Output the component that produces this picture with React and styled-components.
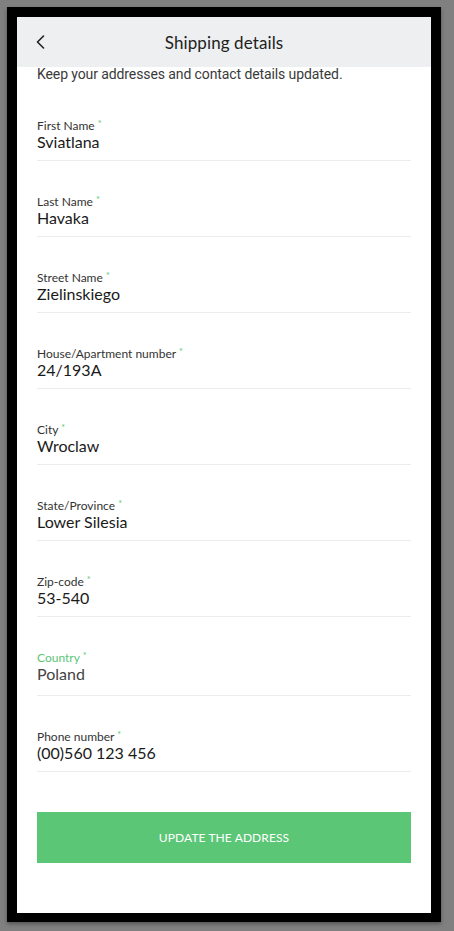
import React from 'react';
import styled, { createGlobalStyle } from 'styled-components';

const COLORS = {
  page: '#808080',
  header: '#eeeff1',
  green: '#5cc677',
  line: '#ececec',
  text: '#222222',
};

const fields = [
  { label: 'First Name', value: 'Sviatlana' },
  { label: 'Last Name', value: 'Havaka' },
  { label: 'Street Name', value: 'Zielinskiego' },
  { label: 'House/Apartment number', value: '24/193A' },
  { label: 'City', value: 'Wroclaw' },
  { label: 'State/Province', value: 'Lower Silesia' },
  { label: 'Zip-code', value: '53-540' },
  { label: 'Country', value: 'Poland', active: true },
  { label: 'Phone number', value: '(00)560 123 456' },
];

const GlobalStyle = createGlobalStyle`
  html, body {
    margin: 0;
    padding: 0;
    background: ${COLORS.page};
  }
  body {
    padding: 7px;
    font-family: Lato, "Open Sans", sans-serif;
  }
  * { box-sizing: border-box; }
`;

export default function App() {
  return (
    <>
      <GlobalStyle />
      <Device>
        <Screen>
          <Header>
            <BackButton aria-label='back'>
              <svg width='9' height='14' viewBox='0 0 9 14' fill='none'>
                <polyline points='7.5,1 1.5,7 7.5,13' stroke='#222' strokeWidth='1.6' strokeLinecap='round' strokeLinejoin='round' />
              </svg>
            </BackButton>
            <Title>Shipping details</Title>
          </Header>
          <Body>
            <Intro>Keep your addresses and contact details updated.</Intro>
            {fields.map((f) => (
              <Field key={f.label} $active={f.active}>
                <Label $active={f.active}>
                  {f.label} <Star>*</Star>
                </Label>
                <Value $active={f.active}>{f.value}</Value>
              </Field>
            ))}
            <SubmitButton>Update the address</SubmitButton>
          </Body>
        </Screen>
      </Device>
    </>
  );
}

const Device = styled.div`
  width: 434px;
  height: 915px;
  background: #000;
  padding: 10px 10px 9px 10px;
  box-shadow: 0 2px 4px rgba(0, 0, 0, .35);
`;

const Screen = styled.div`
  width: 100%;
  height: 100%;
  background: #fff;
  display: flex;
  flex-direction: column;
`;

const Header = styled.div`
  height: 50px;
  background: ${COLORS.header};
  display: flex;
  align-items: center;
  justify-content: center;
  position: relative;
`;

const BackButton = styled.div`
  position: absolute;
  left: 19px;
  top: 18px;
  width: 9px;
  height: 14px;
  display: flex;
  svg { display: block; }
`;

const Title = styled.h1`
  margin: 0;
  font-size: 17px;
  font-weight: 400;
  color: ${COLORS.text};
  letter-spacing: .1px;
`;

const Body = styled.div`
  padding: 0 20px;
  display: flex;
  flex-direction: column;
`;

const Intro = styled.p`
  margin: 0 0 4px;
  font-family: Roboto, sans-serif;
  font-size: 14px;
  line-height: 14px;
  letter-spacing: -0.1px;
  color: #3a3a3a;
`;

const Field = styled.div`
  padding: 34px 0 ${(p) => (p.$active ? '11px' : '8px')};
  border-bottom: 1px solid ${COLORS.line};
`;

const Label = styled.div`
  font-size: 12px;
  line-height: 14px;
  color: ${(p) => (p.$active ? COLORS.green : '#333')};
`;

const Star = styled.span`
  color: ${COLORS.green};
  font-size: 9px;
  vertical-align: top;
  position: relative;
  top: -2px;
`;

const Value = styled.div`
  margin-top: -1px;
  font-size: 16px;
  line-height: 20px;
  color: ${(p) => (p.$active ? '#444' : '#1a1a1a')};
`;

const SubmitButton = styled.button`
  margin-top: 40px;
  height: 51px;
  width: 100%;
  border: none;
  background: ${COLORS.green};
  color: #fff;
  font-family: Lato, sans-serif;
  font-size: 12px;
  text-transform: uppercase;
  letter-spacing: .1px;
`;
